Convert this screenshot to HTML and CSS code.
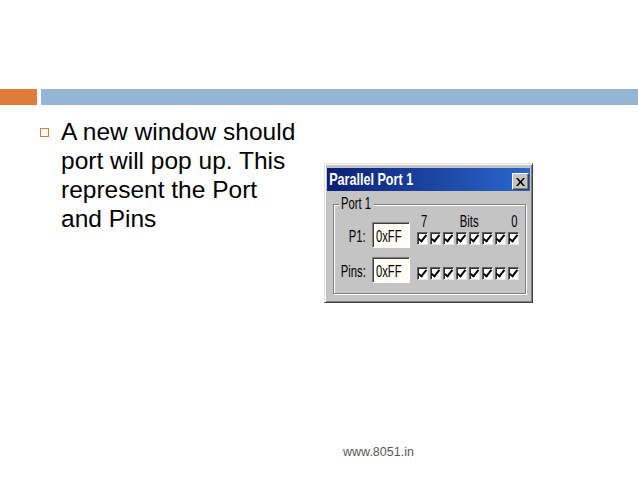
FILE: index.html
```html
<!DOCTYPE html>
<html lang="en">
<head>
  <meta charset="UTF-8">
  <title>Parallel Port</title>
  <link rel="stylesheet" href="styles.css">
</head>
<body>
  <div class="slide">

    <div class="topbar">
      <div class="accent"></div>
      <div class="band"></div>
    </div>

    <div class="main">
      <div class="point">
        <span class="bullet"></span>
        <p class="point-text">A new window should<br>port will pop up. This<br>represent the Port<br>and Pins</p>
      </div>

      <!-- simulator window -->
      <div class="dialog">
        <div class="titlebar">
          <span class="title sq">Parallel Port 1</span>
          <span class="close">
            <svg width="9" height="8" viewBox="0 0 9 8"><path d="M0 0h2l2.5 3 2.5-3h2L5.6 4 9 8H7L4.5 5 2 8H0l3.4-4z" fill="#000"/></svg>
          </span>
        </div>

        <div class="group">
          <span class="legend"><span class="sq">Port 1</span></span>

          <div class="row row-p1">
            <span class="label"><span class="sq sq-r">P1:</span></span>
            <span class="field"><span class="sq">0xFF</span></span>
            <div class="bits">
              <div class="bit-labels">
                <span class="sq">7</span>
                <span class="sq sq-c">Bits</span>
                <span class="sq sq-r">0</span>
              </div>
              <div class="checks">
                <span class="check"></span><span class="check"></span><span class="check"></span><span class="check"></span>
                <span class="check"></span><span class="check"></span><span class="check"></span><span class="check"></span>
              </div>
            </div>
          </div>

          <div class="row row-pins">
            <span class="label"><span class="sq sq-r">Pins:</span></span>
            <span class="field"><span class="sq">0xFF</span></span>
            <div class="bits">
              <div class="checks">
                <span class="check"></span><span class="check"></span><span class="check"></span><span class="check"></span>
                <span class="check"></span><span class="check"></span><span class="check"></span><span class="check"></span>
              </div>
            </div>
          </div>
        </div>
      </div>
    </div>

    <div class="footer">www.8051.in</div>
  </div>
</body>
</html>
```

FILE: styles.css
```css
body {
    margin: 0;
    background: #fff;
    font-family: "Liberation Sans", Arial, sans-serif;
    color: #000;
}

.slide {
    width: 638px;
    height: 478px;
    display: flex;
    flex-direction: column;
    padding-top: 89px;
    box-sizing: border-box;
}

/* orange + blue bar across the top */
.topbar {
    display: flex;
    height: 16px;
}

.accent {
    width: 37px;
    background: #e07b3c;
}

.band {
    flex: 1;
    margin-left: 4px;
    background: #94b6d4;
}

.main {
    display: flex;
    margin-top: 12px;
    padding-left: 40px;
}

.point {
    width: 284px;
    display: flex;
}

.bullet {
    width: 9px;
    height: 9px;
    box-sizing: border-box;
    border: 1px solid #e07b3c;
    margin-top: 11px;
    margin-right: 12px;
    flex-shrink: 0;
}

.point-text {
    margin: 0;
    font-size: 24.5px;
    line-height: 29px;
    white-space: nowrap;
}

/* squeezed text, the screenshot is narrow */
.sq {
    display: inline-block;
    transform: scaleX(0.66);
    transform-origin: left center;
}

.sq-r {
    transform-origin: right center;
}

.sq-c {
    transform-origin: center center;
}

.dialog {
    width: 209px;
    height: 140px;
    box-sizing: border-box;
    margin-top: 46px;
    padding: 4px 2px 2px 2px;
    background: #c4c4c4;
    border: 1px solid;
    border-color: #e2e2e2 #404040 #404040 #e2e2e2;
    box-shadow: inset 1px 1px #fff, inset -1px -1px #808080;
}

.titlebar {
    display: flex;
    justify-content: space-between;
    height: 23px;
    background: linear-gradient(to right, #0c1f74, #2a68cc);
}

.title {
    color: #fff;
    font-weight: bold;
    font-size: 17px;
    line-height: 23px;
    padding-left: 3px;
    transform: scaleX(0.74);
    white-space: nowrap;
}

.close {
    width: 17px;
    height: 17px;
    box-sizing: border-box;
    margin-top: 5px;
    margin-right: 1px;
    display: flex;
    align-items: center;
    justify-content: center;
    background: #c4c4c4;
    border: 1px solid;
    border-color: #fff #404040 #404040 #fff;
    box-shadow: inset -1px -1px #808080;
}

.group {
    position: relative;
    width: 193px;
    height: 90px;
    box-sizing: border-box;
    margin: 13px 0 0 6px;
    padding-top: 9px;
    border: 1px solid #808080;
    box-shadow: inset 1px 1px #fff, 1px 1px #fff;
    font-size: 17px;
    line-height: 16px;
}

.legend {
    position: absolute;
    top: -9px;
    left: 5px;
    width: 31px;
    padding: 0 2px;
    background: #c4c4c4;
    white-space: nowrap;
}

.row {
    display: flex;
    align-items: flex-end;
}

.row-pins {
    margin-top: 9px;
}

.label {
    width: 32px;
    margin-right: 3px;
    margin-bottom: 3px;
    display: flex;
    justify-content: flex-end;
    white-space: nowrap;
}

.field {
    width: 38px;
    height: 26px;
    box-sizing: border-box;
    margin-left: 3px;
    padding: 6px 0 0 3px;
    background: #fffdf4;
    border: 1px solid;
    border-color: #808080 #fff #fff #808080;
    box-shadow: inset 1px 1px #404040;
}

.bits {
    width: 102px;
    margin-left: 7px;
    margin-bottom: 3px;
}

.bit-labels {
    display: flex;
    justify-content: space-between;
    padding: 0 2px 0 4px;
    height: 16px;
}

.checks {
    display: flex;
    gap: 2px;
}

.row-p1 .checks {
    margin-top: 2px;
}

.check {
    position: relative;
    width: 11px;
    height: 13px;
    box-sizing: border-box;
    background: #fff;
    border: 1px solid;
    border-color: #606060 #e4e4e4 #e4e4e4 #606060;
    box-shadow: inset 1px 1px #303030;
}

.check::after {
    content: '';
    position: absolute;
    left: 2px;
    top: 0;
    width: 3px;
    height: 7px;
    border-right: 2px solid #000;
    border-bottom: 2px solid #000;
    transform: rotate(38deg);
}

.footer {
    margin-top: auto;
    padding: 0 0 18px 343px;
    font-size: 12.5px;
    line-height: 15px;
    color: #595959;
}
```
